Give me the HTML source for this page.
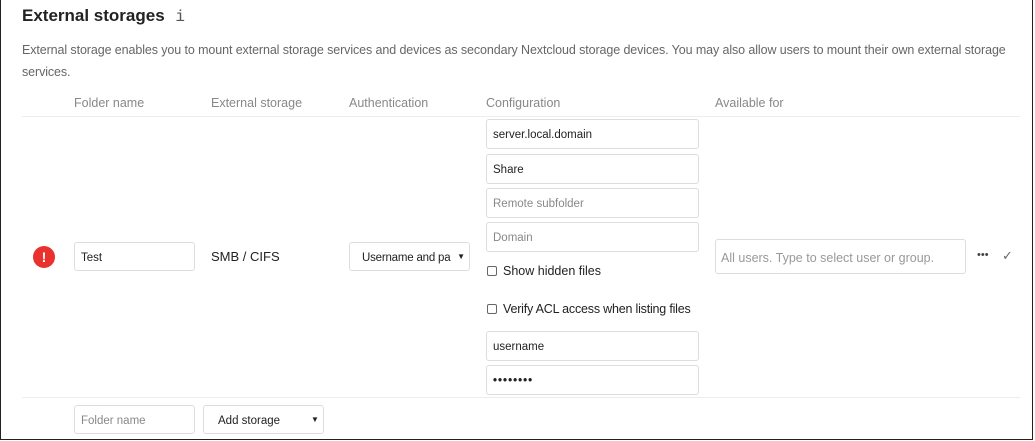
<!DOCTYPE html><html><head><style>
body{margin:0;width:1035px;height:441px;overflow:hidden;background:#fff;font-family:"Liberation Sans",sans-serif;}
.frame{position:absolute;left:0;top:0;width:1033px;height:440px;border:1px solid #222;border-top:none;box-sizing:border-box;}
.a{position:absolute;white-space:nowrap}
.in{position:absolute;border:1px solid #ddd;border-radius:3px;box-sizing:border-box;font-size:11.5px;color:#222;padding-left:6px;padding-top:2px;display:flex;align-items:center;background:#fff;overflow:hidden;white-space:nowrap}
.ph{color:#888}
.h{position:absolute;top:96px;font-size:12.5px;color:#888}
.line{position:absolute;left:22px;width:998px;height:1px;background:#ededed}
.cb{position:absolute;left:487px;width:10px;height:10px;border:1px solid #666;border-radius:2px;box-sizing:border-box}
.arr{position:absolute;right:0;top:0;bottom:0;width:16px;background:#fff;font-size:8px;display:flex;align-items:center;justify-content:center}
</style></head><body>
<div class="frame"></div>
<div class="a" style="left:22px;top:6px;font-size:17px;font-weight:bold;color:#222">External storages <span style="font-weight:normal;font-family:'Liberation Mono',monospace;color:#555;margin-left:6px;font-size:16px">i</span></div>
<div class="a" style="left:22px;top:39px;width:990px;font-size:12.5px;line-height:22px;color:#666;white-space:normal;letter-spacing:-0.1px">External storage enables you to mount external storage services and devices as secondary Nextcloud storage devices. You may also allow users to mount their own external storage services.</div>
<div class="h" style="left:74px">Folder name</div>
<div class="h" style="left:211px">External storage</div>
<div class="h" style="left:349px">Authentication</div>
<div class="h" style="left:486px">Configuration</div>
<div class="h" style="left:715px">Available for</div>
<div class="line" style="top:116px"></div>
<div class="line" style="top:397px"></div>
<div class="a" style="left:33px;top:246px;width:22px;height:22px;border-radius:50%;background:#e9322d;color:#fff;font-weight:bold;font-size:14px;text-align:center;line-height:22px">!</div>
<div class="in" style="left:74px;top:242px;width:121px;height:29px">Test</div>
<div class="a" style="left:211px;top:249px;font-size:13px;color:#222">SMB / CIFS</div>
<div class="in" style="left:349px;top:242px;width:121px;height:29px;padding-left:12px;letter-spacing:-0.2px">Username and pa<span class="arr">▼</span></div>
<div class="in" style="left:486px;top:119px;width:213px;height:30px">server.local.domain</div>
<div class="in" style="left:486px;top:154px;width:213px;height:30px">Share</div>
<div class="in ph" style="left:486px;top:188px;width:213px;height:30px">Remote subfolder</div>
<div class="in ph" style="left:486px;top:222px;width:213px;height:30px">Domain</div>
<div class="cb" style="top:266px"></div><div class="a" style="left:503px;top:264px;font-size:12.5px;color:#222">Show hidden files</div>
<div class="cb" style="top:304px"></div><div class="a" style="left:503px;top:302px;font-size:12.5px;color:#222;letter-spacing:-0.2px">Verify ACL access when listing files</div>
<div class="in" style="left:486px;top:331px;width:213px;height:30px">username</div>
<div class="in" style="left:486px;top:365px;width:213px;height:30px;letter-spacing:1px;font-weight:bold">••••••••</div>
<div class="in ph" style="left:715px;top:239px;width:251px;height:35px;font-size:12.5px;color:#999;padding-left:5px">All users. Type to select user or group.</div>
<div class="a" style="left:977px;top:249px;font-size:11px;color:#444">•••</div>
<div class="a" style="left:1002px;top:248px;font-size:13px;color:#666">✓</div>
<div class="in ph" style="left:74px;top:405px;width:121px;height:29px">Folder name</div>
<div class="in" style="left:203px;top:405px;width:121px;height:29px;padding-left:14px">Add storage<span class="arr">▼</span></div>
</body></html>
